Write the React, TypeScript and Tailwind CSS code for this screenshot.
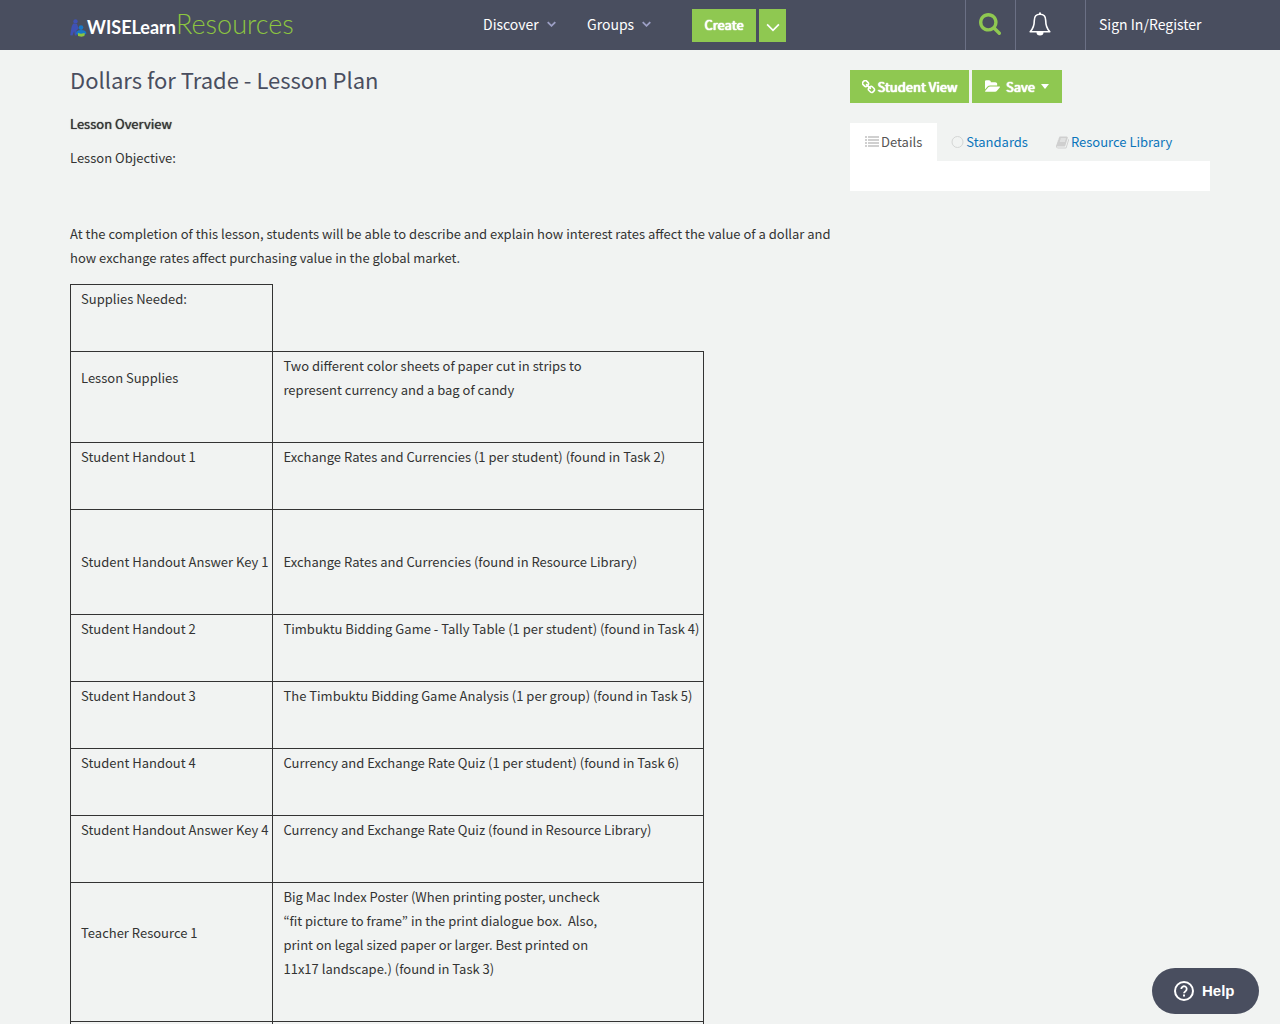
import clsx from "clsx";
import type { ReactNode } from "react";

type IconProps = { className?: string };

type SupplyRow = {
  name: string;
  description?: string;
  tall?: boolean;
};

const supplies: SupplyRow[] = [
  {
    name: "Lesson Supplies",
    description:
      "Two different color sheets of paper cut in strips to represent currency and a bag of candy",
  },
  {
    name: "Student Handout 1",
    description: "Exchange Rates and Currencies (1 per student) (found in Task 2)",
  },
  {
    name: "Student Handout Answer Key 1",
    description: "Exchange Rates and Currencies (found in Resource Library)",
    tall: true,
  },
  {
    name: "Student Handout 2",
    description:
      "Timbuktu Bidding Game - Tally Table (1 per student) (found in Task 4)",
  },
  {
    name: "Student Handout 3",
    description:
      "The Timbuktu Bidding Game Analysis (1 per group) (found in Task 5)",
  },
  {
    name: "Student Handout 4",
    description: "Currency and Exchange Rate Quiz (1 per student) (found in Task 6)",
  },
  {
    name: "Student Handout Answer Key 4",
    description: "Currency and Exchange Rate Quiz (found in Resource Library)",
  },
  {
    name: "Teacher Resource 1",
    description:
      "Big Mac Index Poster (When printing poster, uncheck “fit picture to frame” in the print dialogue box.\u00a0 Also, print on legal sized paper or larger. Best printed on 11x17 landscape.) (found in Task 3)",
  },
  { name: "" },
];

// Descriptions longer than this wrap in a narrow column
const WRAP_LENGTH = 75;

// Regular weight thickened a little, narrower than the true bold
const strong = "[text-shadow:0_0_1px_currentColor]";
const strongOnGreen =
  "[text-shadow:0_0_1px_currentColor,0_0_1px_currentColor,0_0_1px_currentColor]";

function GlyphIcon({
  className,
  d,
  viewBox = "0 0 1792 1792",
}: IconProps & { d: string; viewBox?: string }) {
  return (
    <svg viewBox={viewBox} fill="currentColor" className={className} aria-hidden="true">
      <path d={d} />
    </svg>
  );
}

const SearchIcon = ({ className }: IconProps) => (
  <GlyphIcon
    className={className}
    viewBox="64 128 1664 1664"
    d="M1216 832q0-185-131.500-316.500t-316.500-131.500-316.500 131.500-131.500 316.500 131.500 316.500 316.500 131.500 316.500-131.500 131.500-316.500zm512 832q0 52-38 90t-90 38q-54 0-90-38l-343-342q-179 124-399 124-143 0-273.500-55.500t-225-150-150-225-55.500-273.500 55.500-273.500 150-225 225-150 273.500-55.500 273.500 55.500 225 150 150 225 55.500 273.500q0 220-124 399l343 343q37 37 37 90z"
  />
);

const ChainIcon = ({ className }: IconProps) => (
  <GlyphIcon
    className={className}
    viewBox="64 64 1664 1664"
    d="M1456 1216q0-40-28-68l-208-208q-28-28-68-28-42 0-72 32 3 3 19 18.500t21.500 21.500 15 19 13 25.500 3.500 27.500q0 40-28 68t-68 28q-15 0-27.500-3.500t-25.500-13-19-15-21.500-21.500-18.500-19q-33 31-33 73 0 40 28 68l206 207q27 27 68 27 40 0 68-26l147-146q28-28 28-67zm-703-705q0-40-28-68l-206-207q-28-28-68-28-39 0-68 27l-147 146q-28 28-28 67 0 40 28 68l208 208q27 27 68 27 42 0 72-31-3-3-19-18.500t-21.500-21.500-15-19-13-25.500-3.500-27.500q0-40 28-68t68-28q15 0 27.500 3.500t25.500 13 19 15 21.500 21.500 18.500 19q33-31 33-73zm895 705q0 120-85 203l-147 146q-83 83-203 83-121 0-204-85l-206-207q-83-83-83-203 0-123 88-209l-88-88q-86 88-208 88-120 0-204-84l-208-208q-84-84-84-204t85-203l147-146q83-83 203-83 121 0 204 85l206 207q83 83 83 203 0 123-88 209l88 88q86-88 208-88 120 0 204 84l208 208q84 84 84 204z"
  />
);

const FolderOpenIcon = ({ className }: IconProps) => (
  <GlyphIcon
    className={className}
    viewBox="0 0 1816 1792"
    d="M1815 952q0 31-31 66l-336 396q-43 51-120.500 86.500t-143.500 35.500h-1088q-34 0-60.500-13t-26.500-43q0-31 31-66l336-396q43-51 120.500-86.500t143.500-35.500h1088q34 0 60.500 13t26.500 43zm-343-344v160h-832q-94 0-197 47.500t-164 119.500l-337 396-5 6q0-4-.5-12.500t-.5-12.500v-960q0-92 66-158t158-66h320q92 0 158 66t66 158v32h544q92 0 158 66t66 158z"
  />
);

const BookIcon = ({ className }: IconProps) => (
  <GlyphIcon
    className={className}
    viewBox="64 64 1664 1664"
    d="M1703 478q40 57 18 129l-275 906q-19 64-76.500 107.500t-122.500 43.500h-923q-77 0-148.500-53.500t-99.500-131.500q-24-67-2-127 0-4 3-27t4-37q1-8-3-21.500t-3-19.500q2-11 8-21t16.500-23.500 16.500-23.500q23-38 45-91.500t30-91.500q3-10 .5-30t-.5-28q3-11 17-28t17-23q21-36 42-92t25-90q1-9-2.500-32t.5-28q4-13 22-30.500t22-22.500q19-26 42.500-84.500t27.500-96.500q1-8-3-25.500t-2-26.500q2-8 9-18t18-23 17-21q8-12 16.500-30.500t15-35 16-36 19.500-32 26.500-23.500 36-11.500 47.500 5.500l-1 3q38-9 51-9h761q74 0 114 56t18 130l-274 906q-36 119-71.500 153.500t-128.500 34.500h-869q-27 0-38 15-11 16-1 43 24 70 144 70h923q29 0 56-15.500t35-41.500l300-987q7-22 5-57 38 15 59 43zm-1064 2q-4 13 2 22.500t20 9.500h608q13 0 25.500-9.500t16.500-22.500l21-64q4-13-2-22.500t-20-9.500h-608q-13 0-25.500 9.500t-16.500 22.500zm-83 256q-4 13 2 22.500t20 9.500h608q13 0 25.500-9.500t16.500-22.500l21-64q4-13-2-22.500t-20-9.500h-608q-13 0-25.500 9.500t-16.500 22.500z"
  />
);

const ListIcon = ({ className }: IconProps) => (
  <svg viewBox="0 0 14 14" fill="currentColor" className={className} aria-hidden="true">
    <path d="M0 1h2v2H0zM3 1h11v2H3zM0 4h2v2H0zM3 4h11v2H3zM0 7h2v2H0zM3 7h11v2H3zM0 10h2v2H0zM3 10h11v2H3z" />
  </svg>
);

const CircleIcon = ({ className }: IconProps) => (
  <svg viewBox="0 0 14 14" fill="none" stroke="currentColor" className={className} aria-hidden="true">
    <circle cx="6.500" cy="7" r="5.500" />
  </svg>
);

const ChevronIcon = ({ className, strokeWidth = 2 }: IconProps & { strokeWidth?: number }) => (
  <svg
    viewBox="0 0 10 6"
    fill="none"
    stroke="currentColor"
    strokeWidth={strokeWidth}
    className={className}
    aria-hidden="true"
  >
    <path d="M.8.8 5 5 9.200.8" />
  </svg>
);

const BellIcon = ({ className }: IconProps) => (
  <svg
    viewBox="0 0 22 24"
    fill="none"
    stroke="currentColor"
    strokeWidth="1.600"
    strokeLinejoin="round"
    className={className}
    aria-hidden="true"
  >
    <path d="M11 2.300c-3.700 0-5.700 2.700-5.700 6.200 0 5.500-1 8-4.100 11.200h19.600c-3.100-3.200-4.100-5.700-4.100-11.200 0-3.500-2-6.200-5.700-6.200z" />
    <path d="M11 .5v2" strokeWidth="2" />
    <path d="M8.300 20.500a2.700 2.200 0 0 0 5.400 0z" fill="currentColor" />
  </svg>
);

const PeopleMark = ({ className }: IconProps) => (
  <svg viewBox="0 0 17 18" className={className} aria-hidden="true">
    <circle cx="5.500" cy="2.400" r="2.200" fill="#3f51b5" />
    <path d="M3.600 4.500C1 6.500 1.400 11 .2 16.200l2.300.3 1.600-4.300.8 4.300h2l-.4-5L8.700 9.500 7 5z" fill="#3f51b5" />
    <circle cx="11" cy="8.600" r="2.300" fill="#1878c8" />
    <path d="M6 14.500c.3-2.500 2-3.500 5-3.500s5 1 5.500 3.200L14.500 16H8z" fill="#1878c8" />
    <path d="m8 14 3 .8 3.800-.8-.4 3-3 .8-3.400-.8z" fill="#8dc63f" />
  </svg>
);

function Logo() {
  return (
    <a href="#" className="flex w-[224px] items-baseline whitespace-nowrap font-[Lato,sans-serif]">
      <PeopleMark className="h-[18px] w-[17px] shrink-0 self-end mb-2" />
      <span className="text-[18px] leading-9 font-bold text-white">WISELearn</span>
      <span className="text-[27px] leading-9 font-light text-[#8dc63f]">Resources</span>
    </a>
  );
}

function NavMenu({ children, className }: { children: ReactNode; className: string }) {
  return (
    <button
      type="button"
      className={clsx("flex items-center justify-between text-[14px] text-white", className)}
    >
      {children}
      <ChevronIcon className="h-[6px] w-[9px] text-[#9c9fc4]" />
    </button>
  );
}

function Header() {
  return (
    <header className="h-[50px] bg-[#494e5f]">
      <div className="mx-auto flex h-full max-w-[1170px] items-center px-[15px]">
        <Logo />
        <nav className="ml-[189px] flex items-center gap-[31px] pb-[2px]">
          <NavMenu className="w-[73px]">Discover</NavMenu>
          <NavMenu className="w-[64px]">Groups</NavMenu>
        </nav>
        <div className="ml-[41px] flex gap-[3px]">
          <button
            type="button"
            className={clsx("h-[33px] w-16 bg-[#8fc851] text-[13px] text-white", strongOnGreen)}
          >
            Create
          </button>
          <button
            type="button"
            aria-label="More create options"
            className="flex h-[33px] w-[27px] items-center justify-center bg-[#8fc851] text-white"
          >
            <ChevronIcon className="mt-1 h-[9px] w-[14px]" strokeWidth={1.2} />
          </button>
        </div>
        <div className="ml-auto flex h-full">
          <button
            type="button"
            aria-label="Search"
            className="flex w-[50px] items-center justify-center border-l border-[#6b7085] pr-[2px] pb-[2px] text-[#8fc851]"
          >
            <SearchIcon className="h-[22px] w-[22px]" />
          </button>
          <button
            type="button"
            aria-label="Notifications"
            className="flex w-[70px] items-center border-l border-[#6b7085] pb-[2px] pl-[13px] text-white"
          >
            <BellIcon className="h-6 w-[22px]" />
          </button>
          <a
            href="#"
            className="flex w-[125px] items-center border-l border-[#6b7085] pb-[2px] pl-[13px] text-[14px] whitespace-nowrap text-white"
          >
            Sign In/Register
          </a>
        </div>
      </div>
    </header>
  );
}

function SuppliesTable() {
  return (
    <table className="mt-[14px] border-collapse">
      <tbody>
        <tr>
          <td className="border border-[#333] pt-[2px] pr-1 pb-10 pl-[10px]">Supplies Needed:</td>
        </tr>
        {supplies.map(({ name, description = "", tall }, idx) => {
          const cell = clsx(
            "border border-[#333] pr-1 pb-10 pl-[10px] align-middle",
            tall ? "pt-10" : "pt-[2px]",
          );
          return (
            <tr key={`${name}-${idx}`}>
              <td className={cell}>{name}</td>
              <td className={cell}>
                <p className={description.length > WRAP_LENGTH ? "max-w-[320px]" : ""}>
                  {description}
                </p>
              </td>
            </tr>
          );
        })}
      </tbody>
    </table>
  );
}

function Sidebar() {
  return (
    <aside className="w-[360px] shrink-0 pt-5">
      <div className={clsx("flex gap-[3px] text-[13px] text-white", strongOnGreen)}>
        <button
          type="button"
          className={clsx(
            "flex h-[33px] w-[119px] items-center justify-center gap-[2px] bg-[#8fc851]",
            strongOnGreen,
          )}
        >
          <ChainIcon className="h-[14px] w-[14px]" />
          Student View
        </button>
        <button
          type="button"
          className={clsx(
            "flex h-[33px] w-[90px] items-center justify-center bg-[#8fc851]",
            strongOnGreen,
          )}
        >
          <FolderOpenIcon className="h-[15px] w-[15px]" />
          <span className="mx-[6px]">Save</span>
          <span className="border-x-4 border-t-[5px] border-x-transparent border-t-white" />
        </button>
      </div>
      <nav className="mt-5 flex text-[13px] text-[#0b75bb]">
        <a
          href="#"
          className="flex h-[38px] items-center gap-[2px] bg-white px-[15px] text-[#555]"
        >
          <ListIcon className="h-[14px] w-[14px] text-[#d0d0d0]" />
          Details
        </a>
        <a href="#" className="flex h-[38px] items-center gap-px px-[14px]">
          <CircleIcon className="h-[14px] w-[14px] text-[#d4d6d5]" />
          Standards
        </a>
        <a href="#" className="flex h-[38px] items-center gap-[2px] px-[14px]">
          <BookIcon className="h-[13px] w-[13px] text-[#cfcfcf]" />
          Resource Library
        </a>
      </nav>
      <div className="h-[30px] bg-white" />
    </aside>
  );
}

export default function App() {
  return (
    <div className="min-h-screen bg-[#f1f3f2] font-['Noto_Sans_CJK_KR',sans-serif] text-[13px] leading-6 text-[#333]">
      <Header />
      <div className="mx-auto flex max-w-[1170px] gap-[10px] px-[15px]">
        <main className="min-w-0 flex-1">
          <h1 className="mt-[13px] text-[22px] leading-8 text-[#494e5f]">
            Dollars for Trade - Lesson Plan
          </h1>
          <h2 className={clsx("mt-[17px]", strong)}>Lesson Overview</h2>
          <p className="mt-[10px]">Lesson Objective:</p>
          <p className="mt-[52px]">
            At the completion of this lesson, students will be able to describe and explain how
            interest rates affect the value of a dollar and how exchange rates affect purchasing
            value in the global market.
          </p>
          <SuppliesTable />
        </main>
        <Sidebar />
      </div>
      <button
        type="button"
        className="fixed right-[21px] bottom-[10px] flex h-[46px] w-[107px] items-center gap-2 rounded-full bg-[#494e5f] pl-[22px] font-['Liberation_Sans',sans-serif] text-[15px] font-bold text-white"
      >
        <svg
          viewBox="0 0 20 20"
          fill="none"
          stroke="currentColor"
          strokeWidth="2"
          className="h-5 w-5"
          aria-hidden="true"
        >
          <circle cx="10" cy="10" r="9" />
          <path d="M7.300 8a2.700 2.700 0 1 1 4.200 2.200c-1 .7-1.500 1.100-1.500 2.100" strokeWidth="1.800" />
          <path d="M10 13.600v2" />
        </svg>
        Help
      </button>
    </div>
  );
}
